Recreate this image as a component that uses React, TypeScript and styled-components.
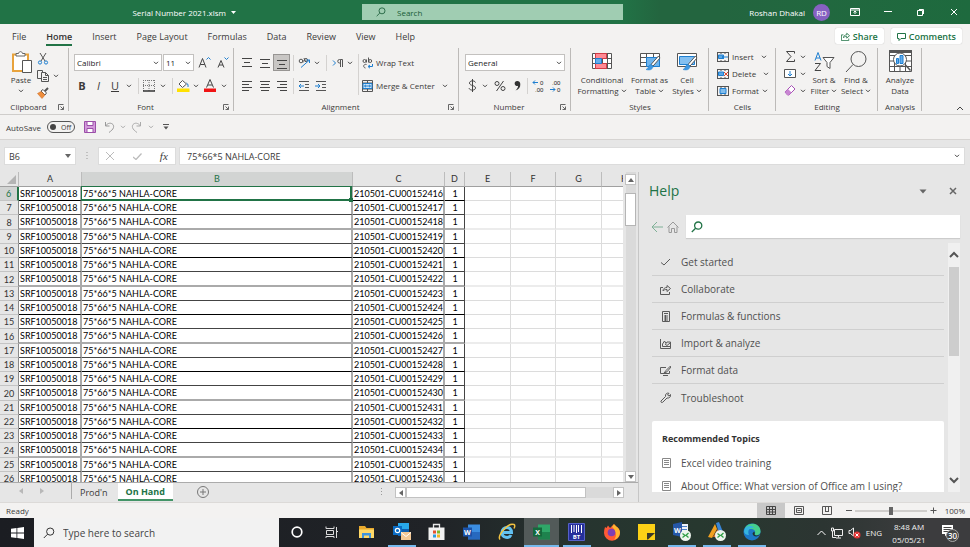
import React from "react";
import styled, { createGlobalStyle, css } from "styled-components";

const GlobalStyle = createGlobalStyle`
  * { box-sizing: border-box; }
  html, body { margin: 0; padding: 0; }
  body { font-family: "Open Sans", "Noto Sans", sans-serif; font-size: 8px; color: #3b3a39; overflow: hidden; }
  button, input, select { font: inherit; color: inherit; margin: 0; padding: 0; border: 0; background: none; outline: none; }
  a { color: inherit; text-decoration: none; }
`;

const Window = styled.div`
  height: 100vh;
  display: flex;
  flex-direction: column;
  background: #e6e6e6;
  svg { display: block; flex: none; fill: none; }
`;

/* ---------- title bar ---------- */
const TitleBar = styled.header`
  height: 24px;
  flex: none;
  display: grid;
  grid-template-columns: 362fr 261fr 347fr;
  align-items: center;
  color: #fff;
  background: linear-gradient(90deg, #217346 0 64%, #23653f 68% 74%, #21683f 85%, #1e6a3e 100%);
`;
const DocTitle = styled.button`
  justify-self: end;
  margin-right: 126px;
  display: flex;
  align-items: center;
  gap: 5px;
  white-space: nowrap;
`;
const TopSearch = styled.label`
  height: 16px;
  display: flex;
  align-items: center;
  gap: 11px;
  padding-left: 14px;
  background: #a0cdb2;
  color: #185c37;
  input { flex: 1; min-width: 0; }
  input::placeholder { color: #185c37; opacity: 1; }
`;
const Account = styled.div`
  display: flex;
  align-items: center;
  justify-content: flex-end;
`;
const Avatar = styled.span`
  width: 17px;
  height: 17px;
  margin: 0 8px;
  border-radius: 50%;
  background: #8661c1;
  line-height: 17px;
  text-align: center;
`;
const CaptionButton = styled.button`
  width: 33px;
  height: 24px;
  display: grid;
  place-items: center;
`;

/* ---------- ribbon tabs ---------- */
const TabBar = styled.nav`
  height: 24px;
  flex: none;
  display: flex;
  align-items: center;
  padding: 0 8px 0 4px;
  background: #f3f2f1;
`;
const RibbonTab = styled.button<{ $active?: boolean }>`
  height: 20px;
  padding: 0 8px;
  font-size: 9px;
  position: relative;
  white-space: nowrap;
  ${(p) => p.$active && css`
    font-weight: 600;
    color: #333;
    &::after { content: ""; position: absolute; left: 8px; right: 8px; bottom: 0; height: 2px; background: #217346; }
  `}
`;
const TabList = styled.div`
  flex: 1;
  display: flex;
  gap: 4px;
`;
const ActionButton = styled.button`
  height: 16px;
  margin-left: 7px;
  padding: 0 6px;
  display: flex;
  align-items: center;
  gap: 3px;
  border-radius: 2px;
  background: #fff;
  box-shadow: 0 0 1px #aaa;
  color: #217346;
  font-weight: 600;
  font-size: 9px;
`;

/* ---------- ribbon ---------- */
const Ribbon = styled.section`
  height: 67px;
  flex: none;
  display: flex;
  background: #f3f2f1;
  border-bottom: 1px solid #cfcdcb;
`;
const Group = styled.div<{ $w: number }>`
  width: ${(p) => p.$w}px;
  height: 66px;
  flex: none;
  display: flex;
  flex-direction: column;
  background: linear-gradient(#bcbab8, #bcbab8) right top / 1px 63px no-repeat;
`;
const GroupBody = styled.div<{ $pad?: string }>`
  flex: 1;
  display: flex;
  align-items: flex-start;
  padding: ${(p) => p.$pad ?? "0"};
`;
const GroupLabel = styled.div`
  height: 12px;
  flex: none;
  margin-bottom: 1px;
  display: flex;
  align-items: center;
  text-align: center;
  white-space: nowrap;
  line-height: 12px;
  span { flex: 1; }
  button { width: 12px; }
`;
const Stack = styled.div<{ $gap?: number }>`
  display: flex;
  flex-direction: column;
  gap: ${(p) => p.$gap ?? 0}px;
`;
const Line = styled.div<{ $h?: number; $gap?: number }>`
  height: ${(p) => p.$h ?? 17}px;
  display: flex;
  align-items: center;
  gap: ${(p) => p.$gap ?? 0}px;
`;
const Tool = styled.button<{ $w: number; $on?: boolean }>`
  width: ${(p) => p.$w}px;
  height: 17px;
  flex: none;
  display: flex;
  align-items: center;
  justify-content: center;
  font-size: 11px;
  ${(p) => p.$on && css`background: #c8c6c4; border: 1px solid #979593;`}
`;
const CollapseButton = styled(Tool)`
  height: 12px;
  align-self: flex-end;
`;
const TextTool = styled.button`
  height: 17px;
  display: flex;
  align-items: center;
  gap: 3px;
  white-space: nowrap;
`;
const BigTool = styled.button<{ $w: number }>`
  width: ${(p) => p.$w}px;
  flex: none;
  display: flex;
  flex-direction: column;
  align-items: center;
  line-height: 11px;
  white-space: nowrap;
  span { min-height: 11px; display: flex; align-items: center; gap: 2px; }
`;
const Rule = styled.i<{ $h?: number }>`
  width: 1px;
  height: ${(p) => p.$h ?? 16}px;
  flex: none;
  margin: 0 3px;
  background: #d4d2d0;
`;
const Combo = styled.label<{ $w: number }>`
  width: ${(p) => p.$w}px;
  height: 17px;
  flex: none;
  display: grid;
  grid-template-columns: 1fr 8px;
  align-items: center;
  border: 1px solid #c3c1bf;
  background: #fff;
  color: #222;
  select { grid-area: 1 / 1 / 2 / 3; appearance: none; padding-left: 2px; height: 15px; }
  svg { grid-area: 1 / 2; pointer-events: none; }
`;

/* ---------- quick access + formula bar ---------- */
const QuickBar = styled.div`
  height: 25px;
  flex: none;
  display: flex;
  align-items: center;
  padding-left: 6px;
  background: #f3f2f1;
  border-bottom: 1px solid #d6d4d2;
`;
const AutoSave = styled.label`
  display: flex;
  align-items: center;
  gap: 6px;
  margin-right: 5px;
`;
const Toggle = styled.span`
  width: 28px;
  height: 12px;
  display: flex;
  align-items: center;
  gap: 5px;
  padding-left: 2px;
  border: 1px solid #555;
  border-radius: 6px;
  font-size: 7px;
  input { appearance: none; width: 6px; height: 6px; border-radius: 50%; background: #444; }
`;
const FormulaBar = styled.div`
  flex: none;
  display: flex;
  align-items: center;
  padding: 7px 5px 7px 4px;
`;
const Field = styled.div<{ $w?: number }>`
  ${(p) => (p.$w ? `width: ${p.$w}px;` : "flex: 1;")}
  height: 18px;
  display: flex;
  align-items: center;
  justify-content: space-around;
  background: #fff;
  border: 1px solid #dcdcdc;
  font-size: 9px;
  input { flex: 1; min-width: 0; padding-left: 4px; }
  svg { margin-right: 4px; }
`;
const FunctionGlyph = styled.i`
  font-family: "Liberation Serif", serif;
  font-size: 11px;
`;
const FormulaInput = styled(Field)`
  margin-left: 3px;
  input { padding-left: 7px; }
`;
const Grip = styled.span`
  width: 22px;
  display: grid;
  place-items: center;
`;

/* ---------- worksheet ---------- */
const Main = styled.main`
  flex: 1;
  min-height: 0;
  display: flex;
`;
const Book = styled.section`
  flex: 1;
  min-width: 0;
  display: flex;
  flex-direction: column;
  border-right: 1px solid #c6c6c6;
`;
const SheetArea = styled.div`
  flex: 1;
  min-height: 0;
  display: flex;
  border-bottom: 1px solid #ababab;
`;
const SheetClip = styled.div`
  flex: 1;
  min-width: 0;
  overflow: hidden;
`;
const Sheet = styled.table`
  width: 648px;
  table-layout: fixed;
  border-collapse: separate;
  border-spacing: 0;
  background: #fff;
  font-family: Lato, sans-serif;
  font-size: 9px;
  color: #000;
`;
const ColHead = styled.th<{ $on?: boolean }>`
  height: 15px;
  padding: 0;
  font-weight: 400;
  line-height: 14px;
  color: ${(p) => (p.$on ? "#217346" : "#333")};
  background: ${(p) => (p.$on ? "#d2d4d3" : "#e6e6e6")};
  border-right: 1px solid #bcbcbc;
  border-bottom: 1px solid ${(p) => (p.$on ? "#217346" : "#a0a0a0")};
  svg { margin-left: 7px; }
`;
const RowHead = styled.th<{ $on?: boolean }>`
  padding: 0;
  font-weight: 400;
  text-align: center;
  color: ${(p) => (p.$on ? "#217346" : "#333")};
  background: ${(p) => (p.$on ? "#d2d4d3" : "#e6e6e6")};
  border-right: ${(p) => (p.$on ? "2px solid #217346" : "1px solid #8a8a8a")};
  border-bottom: 1px solid #c4c4c4;
`;
const Row = styled.tr`
  height: 14px;
  line-height: 13px;
  --line: 1px solid #444;
  --faint: 1px solid #dcdcdc;
  &:nth-child(4n + 1) { --line: 1px solid #000; }
  &:nth-child(4n + 3) { height: 15px; --line: 2px solid #aaa; --faint: 2px solid #ececec; }
`;
const Cell = styled.td<{ $edge?: string; $center?: boolean; $active?: boolean }>`
  padding: 0 0 0 1px;
  white-space: nowrap;
  text-align: ${(p) => (p.$center ? "center" : "left")};
  border-right: ${(p) => p.$edge ?? "1px solid #444"};
  border-bottom: var(--line);
  ${(p) => p.$active && css`
    position: relative;
    &::before { content: ""; position: absolute; inset: -1px; border: 2px solid #217346; border-width: 1px 2px 2px 1px; }
    &::after { content: ""; position: absolute; right: -2px; bottom: -2px; width: 4px; height: 4px; background: #217346; }
  `}
`;
const Blank = styled.td`
  padding: 0;
  border-right: 1px solid #dcdcdc;
  border-bottom: var(--faint);
`;
const VScroll = styled.div`
  width: 15px;
  display: flex;
  flex-direction: column;
  align-items: flex-end;
  padding: 2px 2px 0 0;
  background: linear-gradient(90deg, #e6e6e6 3px, #dadada 3px 13px, #e6e6e6 13px);
`;
const ScrollButton = styled.button`
  width: 11px;
  height: 11px;
  flex: none;
  display: grid;
  place-items: center;
  background: #fff;
  border: 1px solid #c2c2c2;
`;
const VThumb = styled.div`
  width: 11px;
  height: 33px;
  margin-top: 8px;
  margin-bottom: auto;
  background: #fff;
  border: 1px solid #b5b5b5;
`;
const SheetTabs = styled.div`
  height: 19px;
  flex: none;
  display: flex;
  align-items: flex-start;
  padding-right: 14px;
`;
const TabArrows = styled.div`
  width: 72px;
  height: 16px;
  display: flex;
  align-items: center;
  gap: 15px;
  padding-left: 18px;
  margin-right: 8px;
  border-right: 1px solid #ababab;
`;
const SheetTab = styled.button<{ $on?: boolean }>`
  height: 18px;
  padding: 0 ${(p) => (p.$on ? 8 : 10)}px 0 ${(p) => (p.$on ? 8 : 0)}px;
  font-size: 9px;
  white-space: nowrap;
  ${(p) => p.$on && css`background: #fff; color: #217346; font-weight: 700; border-bottom: 2px solid #439467;`}
`;
const AddSheet = styled.button`
  height: 18px;
  margin: 0 auto 0 24px;
  display: grid;
  place-items: center;
`;
const HScroll = styled.div`
  width: 229px;
  height: 11px;
  margin: 4px 0 0 12px;
  display: flex;
  background: #dadada;
`;
const HThumb = styled.div`
  width: 180px;
  margin-right: auto;
  background: #fff;
  border: 1px solid #c2c2c2;
`;

/* ---------- help pane ---------- */
const HelpPane = styled.aside`
  width: 331px;
  flex: none;
  display: flex;
  flex-direction: column;
  padding: 9px 10px 10px 12px;
  color: #505050;
`;
const HelpHeader = styled.div`
  height: 20px;
  display: flex;
  align-items: center;
  gap: 22px;
  padding-right: 3px;
  h2 { flex: 1; margin: 0 0 0 -2px; font-size: 14px; font-weight: 400; line-height: 20px; color: #217346; }
`;
const HelpSearchRow = styled.div`
  display: flex;
  align-items: center;
  margin-top: 14px;
  gap: 4px;
`;
const HelpSearch = styled.label`
  flex: 1;
  height: 23px;
  margin-left: 3px;
  padding-left: 5px;
  display: flex;
  align-items: center;
  background: #fff;
  box-shadow: 0 1px 1px #ccc;
  input { flex: 1; min-width: 0; }
`;
const HelpScroll = styled.div`
  flex: 1;
  min-height: 0;
  display: flex;
  margin-top: 5px;
`;
const HelpContent = styled.div`
  flex: 1;
  min-width: 0;
  overflow: hidden;
  padding: 6px 4px 0 1px;
`;
const HelpLink = styled.a`
  height: 27px;
  display: flex;
  align-items: center;
  gap: 10px;
  padding-left: 8px;
  border-bottom: 1px solid #cfcfcf;
  font-size: 10px;
  &:last-of-type { border-bottom: 0; }
`;
const Topics = styled.section`
  margin-top: 10px;
  padding: 9px 10px 0;
  background: #fff;
  border-radius: 2px;
  h3 { margin: 0 0 3px; font-size: 9px; line-height: 18px; font-weight: 700; color: #333; }
  a { height: 23px; display: flex; align-items: center; gap: 10px; font-size: 10px; white-space: nowrap; }
`;
const HelpBar = styled.div`
  width: 12px;
  display: flex;
  flex-direction: column;
  align-items: center;
  background: #f0f0f0;
  div { width: 10px; height: 89px; background: #cdcdcd; margin-bottom: auto; }
  button { height: 24px; }
`;

/* ---------- status bar ---------- */
const StatusBar = styled.footer`
  height: 16px;
  flex: none;
  display: flex;
  align-items: center;
  padding: 0 5px 0 6px;
  background: #f3f2f1;
  border-top: 1px solid #dcdad8;
`;
const ViewButtons = styled.div`
  display: flex;
  margin-right: 4px;
`;
const ViewButton = styled.button<{ $on?: boolean }>`
  width: 28px;
  height: 15px;
  display: grid;
  place-items: center;
  background: ${(p) => (p.$on ? "#c8c8c8" : "transparent")};
`;
const Zoom = styled.input`
  appearance: none;
  width: 72px;
  height: 11px;
  margin: 0 3px;
  &::-webkit-slider-runnable-track { height: 2px; background: #d0cecc; }
  &::-webkit-slider-thumb { appearance: none; width: 4px; height: 8px; margin-top: -3px; background: #666; }
`;
const ZoomValue = styled.span`
  width: 28px;
  text-align: right;
`;
const Spacer = styled.span`flex: 1;`;

/* ---------- taskbar ---------- */
const Taskbar = styled.nav`
  height: 29px;
  flex: none;
  display: flex;
  color: #f2f2f2;
  background: linear-gradient(90deg, #1b1d22 0%, #202327 45%, #26342f 60%, #27382f 72%, #2c3532 85%, #3c3c3e 95%);
`;
const StartButton = styled.button`
  width: 34px;
  display: grid;
  place-items: center;
`;
const TaskSearch = styled.label`
  width: 245px;
  display: flex;
  align-items: center;
  gap: 8px;
  padding-left: 9px;
  background: #f2f2f2;
  color: #333;
  font-size: 10px;
  input { flex: 1; min-width: 0; }
  input::placeholder { color: #444; opacity: 1; }
`;
const TaskButton = styled.button<{ $open?: boolean; $on?: boolean }>`
  width: 35px;
  flex: none;
  display: grid;
  place-items: center;
  padding-bottom: 2px;
  ${(p) => p.$open && css`
    background: linear-gradient(#76b9ed, #76b9ed) center bottom / ${p.$on ? "100%" : "28px"} 2px no-repeat ${p.$on ? ", #525a59" : ""};
  `}
`;
const Tray = styled.div`
  margin-left: auto;
  display: flex;
  align-items: center;
  gap: 5px;
  padding-right: 10px;
`;
const Clock = styled.time`
  width: 44px;
  margin-right: 5px;
  text-align: center;
  line-height: 13px;
  white-space: nowrap;
`;

/* ---------- glyphs ---------- */
const Chevron = ({ color = "#444" }: { color?: string }) => (
  <svg width="6" height="4" viewBox="0 0 6 4" stroke={color}><path d="M1 .8 3 2.8 5 .8" /></svg>
);
const Down = ({ w = 12 }: { w?: number }) => <Tool as="span" $w={w}><Chevron /></Tool>;
const Tri = ({ dir = "down", color = "#666" }: { dir?: "down" | "up" | "left" | "right"; color?: string }) => {
  const d = { down: "M0 1h6L3 5z", up: "M0 5h6L3 1z", left: "M5 0v6L1 3z", right: "M1 0v6l4-3z" }[dir];
  return <svg width="6" height="6" viewBox="0 0 6 6"><path fill={color} d={d} /></svg>;
};
const Lens = ({ size = 12, color = "#333", w = 1 }: { size?: number; color?: string; w?: number }) => (
  <svg width={size} height={size} viewBox="0 0 12 12" stroke={color} strokeWidth={w}><circle cx="7.2" cy="4.6" r="3.6" /><path d="M4.6 7.2.8 11" /></svg>
);
const Launcher = () => (
  <svg width="8" height="8" viewBox="0 0 8 8" stroke="#666"><path d="M1.500 7V1.500h5M3.500 3.500 6.500 6.500M6.500 3.500v3h-3" /></svg>
);
const Lines = ({ rows }: { rows: number[][] }) => (
  <svg width="12" height="12" viewBox="0 0 12 12" stroke="#444">
    {rows.map(([y, a, b]) => <path key={y} d={`M${a} ${y}.5H${b}`} />)}
  </svg>
);
const Indent = ({ flip }: { flip?: boolean }) => (
  <svg width="12" height="12" viewBox="0 0 12 12" stroke="#555">
    <path d="M1 1.5h10M7 4.5h4M7 7.5h4M1 10.5h10" /><path stroke="#1e7fd0" d={flip ? "M0 6h5M3 4l2 2-2 2" : "M1 6h5M3 4 1 6l2 2"} />
  </svg>
);
const GridIcon = ({ kind }: { kind: "insert" | "delete" | "format" }) => (
  <svg width="12" height="12" viewBox="0 0 12 12" stroke="#555">
    <path d="M.5 1v10M4 1v2M8 1v2M11.500 1v10M.5 1.5h11M.5 10.500h11M4 9v2M8 9v2" />
    {kind === "format" ? <path fill="#83bdeb" stroke="#1e7fd0" d="M3 3.500h6v5H3z" /> : <path fill="#5aa7e4" stroke="#1e7fd0" d="M1.500 4h5v3.500h-5z" />}
    {kind === "insert" && <path stroke="#1e7fd0" d="M11 6H5M7 4 5 6l2 2" />}
    {kind === "delete" && <path stroke="#e0492f" d="M7 4l4 4M11 4 7 8" />}
  </svg>
);
const Brush = () => <g><path d="M19.500 6 12 14.500l2 1.600L21 8z" fill="#fff" stroke="#555" /><path d="M12 14.500c-3 0-1.500 3.500-5 5 3 1 7 .5 7-3.400z" fill="#3f97e0" stroke="#1e7fd0" strokeWidth=".5" /></g>;
const Brand = ({ letter, fill, dark }: { letter: string; fill: string; dark: string }) => (
  <svg width="18" height="18" viewBox="0 0 18 18">
    <path fill={fill} d="M5 1.500h12v15H5z" /><path fill={dark} d="M5 9h12v7.500H5z" opacity=".6" /><path fill={dark} d="M0 4.500h9v9H0z" />
    <text x="4.500" y="12" fill="#fff" fontSize="7" fontWeight="700" textAnchor="middle">{letter}</text>
  </svg>
);
const Paper = () => <svg width="9" height="10" viewBox="0 0 9 10" stroke="#888"><path d="M.5.500h8v9h-8zM2 2.500h5M2 4.500h5M2 6.500h5" /></svg>;

const helpIcons = [
  <path key="a" d="M1 5.500 4 8l6-6" />,
  <path key="b" d="M3 3.500H.5v7h9V8M3 7c0-2.500 2-3.500 4-3.500V1.500l3.500 3-3.500 3v-2c-2 0-3 .2-4 1.500z" />,
  <path key="c" d="M2.500.500h7v10h-7zM4 2.500h4M4 5h4M4 7h4M4 9h4M5.500 4v6" />,
  <path key="d" d="M.5 1v9.500h10V4H7L6 5.500 4.500 3 2.500 6v2.500h8M5 6l2 1.500L10 5" />,
  <path key="e" d="M6 2.500H.5v6h9V6M3 10.500h5M10.500 1 6 5.500 4 8l3-1.200L11 2z" />,
  <path key="f" d="M10.500 2.500 9 4 7.500 3 9 1.300C7 .5 5 2 5.500 4.500L1 9c-.5 1.500 1 2 1.800 1.200L7 6c2.500.5 4-1.500 3.500-3.500z" />,
];
const helpTopics = ["Get started", "Collaborate", "Formulas & functions", "Import & analyze", "Format data", "Troubleshoot"];
const tabs = ["File", "Home", "Insert", "Page Layout", "Formulas", "Data", "Review", "View", "Help"];
const rows = Array.from({ length: 21 }, (_, i) => i);
const greyEdge = "2px solid #aaa";
const centerRows = { top: [[1, 1, 11], [5, 3, 9], [9, 1, 11]], mid: [[2, 1, 11], [6, 3, 9], [10, 1, 11]], bot: [[3, 1, 11], [7, 3, 9], [11, 1, 11]] };
const para = (side: "l" | "c" | "r") => [1, 4, 7, 10].map((y, i) => (i % 2 === 0 ? [y, 1, 11] : side === "l" ? [y, 1, 8] : side === "c" ? [y, 2, 10] : [y, 4, 11]));

const Label = ({ text, launch }: { text: string; launch?: boolean }) => (
  <GroupLabel><span>{text}</span>{launch && <button aria-label={`${text} settings`}><Launcher /></button>}</GroupLabel>
);

function RibbonPanel() {
  return (
    <Ribbon>
      <Group $w={69}>
        <GroupBody $pad="2px 0 0 8px">
          <BigTool $w={26}>
            <svg width="22" height="24" viewBox="0 0 22 24"><path d="M3 4.500h15V21H3z" fill="#fff" stroke="#e8a33d" strokeWidth="2" /><path d="M6 6V3.500h2.500C9 1 12 1 12.500 3.500H15V6z" fill="#fff" stroke="#666" /><path d="M12.500 10.500h9v12h-9z" fill="#fff" stroke="#555" /></svg>
            <span>Paste</span><span><Chevron /></span>
          </BigTool>
          <Stack>
            <Tool $w={18} aria-label="Cut"><svg width="12" height="13" viewBox="0 0 12 13" stroke="#555"><path d="M3 1l5 8M9 1 4 9" /><g stroke="#1e7fd0"><circle cx="3" cy="10.500" r="1.600" /><circle cx="9" cy="10.500" r="1.600" /></g></svg></Tool>
            <Line><Tool $w={18} aria-label="Copy"><svg width="12" height="13" viewBox="0 0 12 13" stroke="#555"><path d="M4 9.500H.5v-8h5V3M4.500 3.500h4l3 3v6h-7zM8.500 3.500v3h3M6 8.500h4M6 10.500h4" /></svg></Tool><Down w={7} /></Line>
            <Tool $w={18} aria-label="Format Painter"><svg width="12" height="12" viewBox="0 0 12 12"><path d="M11 1 7.500 4.500" stroke="#555" strokeWidth="2" /><path d="M4 4l4 4 1.500-2L6 2.500z" fill="#fff" stroke="#555" /><path d="M4 4.500.5 6.500 5 11.500 8 8z" fill="#ef8e3c" stroke="#c8641c" strokeWidth=".5" /></svg></Tool>
          </Stack>
        </GroupBody>
        <Label text="Clipboard" launch />
      </Group>
      <Group $w={165}>
        <GroupBody $pad="6px 0 0 5px">
          <Stack $gap={6}>
            <Line $gap={1}>
              <Combo $w={88}><select aria-label="Font"><option>Calibri</option></select><Chevron /></Combo>
              <Combo $w={31}><select aria-label="Font size"><option>11</option></select><Chevron /></Combo>
              <Tool $w={19} aria-label="Increase font size"><svg width="13" height="13" viewBox="0 0 13 13" stroke="#444"><path d="M1 11.500 4.500 2.500 8 11.500M2.300 8.500h4.400" /><path stroke="#1e7fd0" d="M8.500 3.500l2-2 2 2" /></svg></Tool>
              <Tool $w={16} aria-label="Decrease font size"><svg width="12" height="13" viewBox="0 0 12 13" stroke="#444"><path d="M1 11.500 4 4.500 7 11.500M2 9h4" /><path stroke="#1e7fd0" d="M7.500 1.500l2 2 2-2" /></svg></Tool>
            </Line>
            <Line>
              <Tool $w={16}><b>B</b></Tool><Tool $w={17}><i>I</i></Tool><Tool $w={16}><u>U</u></Tool><Down />
              <Rule />
              <Tool $w={14} aria-label="Borders"><svg width="12" height="12" viewBox="0 0 12 12" stroke="#777"><path strokeDasharray="1 1" d="M0 .5h12M.5 0v11M11.500 0v11M6 0v11M0 5.500h12" /><path stroke="#333" strokeWidth="1.500" d="M0 11h12" /></svg></Tool><Down w={13} />
              <Rule />
              <Tool $w={14} aria-label="Fill color"><svg width="13" height="13" viewBox="0 0 13 13"><path d="M5.500 1.500 9.500 5 5.500 8.500 2 5z" stroke="#555" fill="#fff" /><path d="M9.500 4c2 1 1.500 3 1.500 4" stroke="#1e7fd0" /><path fill="#ffe100" d="M0 9.500h12.500V13H0z" /></svg></Tool><Down />
              <Tool $w={16} aria-label="Font color"><svg width="12" height="13" viewBox="0 0 12 13"><path stroke="#444" d="M2.500 8.500 6 .500 9.500 8.500M4 6h4" /><path fill="#f01414" d="M0 9.500h12V13H0z" /></svg></Tool><Down />
            </Line>
          </Stack>
        </GroupBody>
        <Label text="Font" launch />
      </Group>
      <Group $w={225}>
        <GroupBody $pad="6px 0 0 4px">
          <Stack $gap={6}>
            <Line>
              <Tool $w={18} aria-label="Top align"><Lines rows={centerRows.top} /></Tool>
              <Tool $w={17} aria-label="Middle align"><Lines rows={centerRows.mid} /></Tool>
              <Tool $w={17} $on aria-label="Bottom align"><Lines rows={centerRows.bot} /></Tool>
              <Rule />
              <Tool $w={14} aria-label="Orientation"><svg width="13" height="13" viewBox="0 0 13 13" stroke="#555"><circle cx="3" cy="5" r="1.800" /><path d="M5 6.500V4M6 2l1.500 4" /><circle cx="8" cy="4" r="1.500" /><path stroke="#1e7fd0" d="M3 11.500 11.500 4M8.500 4h3v3" /></svg></Tool><Down />
              <Rule />
              <Tool $w={15} aria-label="Text direction"><svg width="12" height="10" viewBox="0 0 12 10" stroke="#555"><path stroke="#1e7fd0" d="M1 2.500 3.500 5 1 7.500" /><path d="M8.500 9V1.500h-1a1.500 1.500 0 0 0 0 3.500h1M10.500 9V1.500h-2" /></svg></Tool><Down w={10} />
            </Line>
            <Line>
              <Tool $w={18} aria-label="Align left"><Lines rows={para("l")} /></Tool>
              <Tool $w={17} aria-label="Align center"><Lines rows={para("c")} /></Tool>
              <Tool $w={17} aria-label="Align right"><Lines rows={para("r")} /></Tool>
              <Rule />
              <Tool $w={14} aria-label="Decrease indent"><Indent /></Tool>
              <Tool $w={20} aria-label="Increase indent"><Indent flip /></Tool>
            </Line>
          </Stack>
          <Rule $h={41} />
          <Stack $gap={6}>
            <TextTool><svg width="11" height="12" viewBox="0 0 11 12" stroke="#555"><circle cx="2.500" cy="4" r="1.500" /><path d="M4.500 5.500V2.500M6.500.500V5.500M4.500 7.500c-3-1-4 3-1 3.500" /><circle cx="8.200" cy="4" r="1.500" /><path stroke="#1e7fd0" d="M10.500 7v2.500h-4M8 8 6 9.500l2 1.700" /></svg>Wrap Text</TextTool>
            <TextTool><svg width="11" height="12" viewBox="0 0 11 12" stroke="#555"><path d="M.5.500h10v11H.5zM.5 3h10M.5 9h10M5.500.500V3M5.500 9v2.500" /><path fill="#cfe5f7" stroke="#1e7fd0" d="M1 3.500h9v5H1z" /><path stroke="#1e7fd0" d="M2.500 6h6M4 4.800 2.500 6 4 7.200M7 4.800 8.500 6 7 7.200" /></svg>Merge &amp; Center<Down w={14} /></TextTool>
          </Stack>
        </GroupBody>
        <Label text="Alignment" launch />
      </Group>
      <Group $w={112}>
        <GroupBody $pad="6px 0 0 6px">
          <Stack $gap={6}>
            <Combo $w={100}><select aria-label="Number format"><option>General</option></select><Chevron /></Combo>
            <Line>
              <Tool $w={15} aria-label="Currency"><svg width="9" height="13" viewBox="0 0 9 13" stroke="#444"><path d="M4.500 0v13M7.500 3.500C6.500 1 1.500 1.500 1.500 4c0 3 6 2 6 5 0 2.500-5.500 3-6.500.2" /></svg></Tool><Down w={10} />
              <Tool $w={20} aria-label="Percent"><svg width="12" height="12" viewBox="0 0 12 12" stroke="#444"><circle cx="3" cy="3.500" r="2" /><circle cx="9" cy="8.500" r="2" /><path d="M9.500 1l-7 10" /></svg></Tool>
              <Tool $w={14} aria-label="Comma"><svg width="7" height="12" viewBox="0 0 7 12"><path fill="#333" d="M3.300 1a2.500 2.500 0 1 0 .8 4.800C4 8 3 9 1.500 10.500 5 9.500 6.500 7 6.300 4 6.200 2 5 1 3.300 1z" /></svg></Tool>
              <Rule />
              <Tool $w={15} aria-label="Increase decimal"><svg width="13" height="16" viewBox="0 0 13 16"><path stroke="#1e7fd0" d="M1 4.500h5M3 2.500 1 4.500l2 2" /><g fill="#222" fontSize="6" fontFamily="Liberation Sans, sans-serif"><text x="8" y="7">0</text><text x="3" y="14">.00</text></g></svg></Tool>
              <Tool $w={18} aria-label="Decrease decimal"><svg width="13" height="16" viewBox="0 0 13 16"><path stroke="#1e7fd0" d="M1 11.500h5M4 9.500l2 2-2 2" /><g fill="#222" fontSize="6" fontFamily="Liberation Sans, sans-serif"><text x="3" y="7">.00</text><text x="8" y="14">0</text></g></svg></Tool>
            </Line>
          </Stack>
        </GroupBody>
        <Label text="Number" launch />
      </Group>
      <Group $w={138}>
        <GroupBody $pad="2px 0 0 5px">
          <BigTool $w={52}>
            <svg width="22" height="24" viewBox="0 0 22 24" stroke="#555"><path fill="#fff" d="M1.500 3.500h19v15h-19z" /><path d="M1 8.500h19.500M1 13.500h19.500M16.500 3.500v15M11.500 3.500v15" /><path fill="#ff8a94" stroke="#d13b46" d="M4.500 3.500h11v5h-11zM4.500 13.500h11v5h-11z" /><path fill="#63adec" stroke="#1e7fd0" d="M4.500 8.500h6v5h-6z" /></svg>
            <span>Conditional</span><span>Formatting<Chevron /></span>
          </BigTool>
          <BigTool $w={43}>
            <svg width="22" height="24" viewBox="0 0 22 24" stroke="#555"><path fill="#fff" d="M1.500 3.500h19v13h-19z" /><path d="M1 7.500h19M7.500 3.500v13M14.500 3.500v4M1 12.500h7" /><path fill="#6fb5ee" stroke="#1e7fd0" d="M7.500 7.500h13v9h-13z" /><Brush /></svg>
            <span>Format as</span><span>Table<Chevron /></span>
          </BigTool>
          <BigTool $w={32}>
            <svg width="22" height="24" viewBox="0 0 22 24" stroke="#555"><path fill="#fff" d="M1.500 3.500h19v13h-19z" /><path fill="#83bff0" stroke="#1e7fd0" d="M3.500 6.500h15v8h-15z" /><Brush /></svg>
            <span>Cell</span><span>Styles<Chevron /></span>
          </BigTool>
        </GroupBody>
        <Label text="Styles" />
      </Group>
      <Group $w={67}>
        <GroupBody $pad="0 0 0 8px">
          <Stack>
            <TextTool><GridIcon kind="insert" />Insert<Down w={14} /></TextTool>
            <TextTool><GridIcon kind="delete" />Delete<Down w={14} /></TextTool>
            <TextTool><GridIcon kind="format" />Format<Chevron /></TextTool>
          </Stack>
        </GroupBody>
        <Label text="Cells" />
      </Group>
      <Group $w={102}>
        <GroupBody $pad="0 0 0 6px">
          <Stack>
            <Line><Tool $w={16} aria-label="Sum"><svg width="10" height="11" viewBox="0 0 10 11" stroke="#444"><path d="M9.500 2.500v-2h-8L6 5.500l-4.500 5h8v-2" /></svg></Tool><Down w={10} /></Line>
            <Line><Tool $w={16} aria-label="Fill"><svg width="12" height="11" viewBox="0 0 12 11"><path fill="#fff" stroke="#555" d="M.5 1.500h11v8H.5z" /><path stroke="#1e7fd0" d="M6 3v5M4 6l2 2 2-2" /></svg></Tool><Down w={10} /></Line>
            <Line><Tool $w={16} aria-label="Clear"><svg width="12" height="11" viewBox="0 0 12 11"><path fill="#fff" stroke="#a74fb5" d="M7.500.500 11 4 5 10H3.500L1 7z" /><path fill="#c886d2" d="M4 4 7.500 7.500 5 10H3.500L1 7z" /></svg></Tool><Down w={10} /></Line>
          </Stack>
          <Line $h={50}>
            <BigTool $w={32}>
              <svg width="22" height="24" viewBox="0 0 22 24"><path stroke="#1e7fd0" d="M2 10.500 5 2.500 8 10.500M3 8h4" /><path stroke="#444" d="M2 13.500h5.500l-5.500 7h6" /><path fill="#fff" stroke="#555" d="M10 7.500h11l-4 5v6l-3-2v-4z" /></svg>
              <span>Sort &amp;</span><span>Filter<Chevron /></span>
            </BigTool>
            <BigTool $w={32}>
              <svg width="22" height="24" viewBox="0 0 22 24" stroke="#555"><circle cx="13.500" cy="9" r="7.500" /><path d="M8 14.500 1 22" /></svg>
              <span>Find &amp;</span><span>Select<Chevron /></span>
            </BigTool>
          </Line>
        </GroupBody>
        <Label text="Editing" />
      </Group>
      <Group $w={44}>
        <GroupBody $pad="2px 0 0 5px">
          <BigTool $w={34}>
            <svg width="24" height="24" viewBox="0 0 24 24" stroke="#555"><path fill="#fff" d="M1.500.500h22v21h-22z" /><path d="M1.500 5.500h22M1.500 11h22M1.500 16.500h22M6.500 5v17M17.500 5v17M12 16v6" /><path fill="#555" d="M1.500.500h22v2h-22z" /><circle cx="12" cy="9.500" r="6.500" fill="#fff" /><path stroke="#1e7fd0" fill="#63adec" d="M8.500 8.500h2v5h-2zM12 5.500h3v8h-3z" /><path d="M17 14.500l5.500 6" strokeWidth="1.500" /></svg>
            <span>Analyze</span><span>Data</span>
          </BigTool>
        </GroupBody>
        <Label text="Analysis" />
      </Group>
      <Spacer />
      <CollapseButton $w={20} aria-label="Collapse ribbon"><svg width="8" height="5" viewBox="0 0 8 5" stroke="#444"><path d="M1 4l3-3 3 3" /></svg></CollapseButton>
    </Ribbon>
  );
}

function Worksheet() {
  return (
    <Book>
      <SheetArea>
        <SheetClip>
          <Sheet>
            <colgroup>{[19, 63, 271, 92, 20, 46, 45, 46, 46].map((w, i) => <col key={i} width={w} />)}</colgroup>
            <thead>
              <tr>
                <ColHead><svg width="9" height="9" viewBox="0 0 9 9"><path d="M9 0v9H0z" fill="#b4b4b4" /></svg></ColHead>
                {"ABCDEFGH".split("").map((c) => <ColHead key={c} $on={c === "B"}>{c}</ColHead>)}
              </tr>
            </thead>
            <tbody>
              {rows.map((i) => (
                <Row key={i}>
                  <RowHead $on={i === 0}>{i + 6}</RowHead>
                  <Cell $edge={greyEdge}>SRF10050018</Cell>
                  <Cell $edge={greyEdge} $active={i === 0}>75*66*5 NAHLA-CORE</Cell>
                  <Cell $edge={greyEdge}>{`210501-CU00${152416 + i}`}</Cell>
                  <Cell $center>1</Cell>
                  <Blank /><Blank /><Blank /><Blank />
                </Row>
              ))}
            </tbody>
          </Sheet>
        </SheetClip>
        <VScroll>
          <ScrollButton aria-label="Scroll up"><Tri dir="up" /></ScrollButton>
          <VThumb />
          <ScrollButton aria-label="Scroll down"><Tri /></ScrollButton>
        </VScroll>
      </SheetArea>
      <SheetTabs>
        <TabArrows><Tri dir="left" color="#b8b8b8" /><Tri dir="right" color="#b8b8b8" /></TabArrows>
        <SheetTab>Prod'n</SheetTab>
        <SheetTab $on>On Hand</SheetTab>
        <AddSheet aria-label="New sheet"><svg width="12" height="12" viewBox="0 0 12 12" stroke="#777"><circle cx="6" cy="6" r="5.500" /><path d="M6 3v6M3 6h6" /></svg></AddSheet>
        <svg width="3" height="18" viewBox="0 0 3 18" stroke="#999"><path strokeDasharray="1 2" d="M1.500 5v9" /></svg>
        <HScroll>
          <ScrollButton aria-label="Scroll left"><Tri dir="left" /></ScrollButton>
          <HThumb />
          <ScrollButton aria-label="Scroll right"><Tri dir="right" /></ScrollButton>
        </HScroll>
      </SheetTabs>
    </Book>
  );
}

function Help() {
  return (
    <HelpPane>
      <HelpHeader>
        <h2>Help</h2>
        <button aria-label="Pane options"><svg width="8" height="5" viewBox="0 0 8 5"><path fill="#666" d="M.5.500h7L4 4.500z" /></svg></button>
        <button aria-label="Close help"><svg width="8" height="8" viewBox="0 0 8 8" stroke="#666" strokeWidth="1.500"><path d="M1 1l6 6M7 1 1 7" /></svg></button>
      </HelpHeader>
      <HelpSearchRow>
        <button aria-label="Back"><svg width="12" height="12" viewBox="0 0 12 12" stroke="#7fb096"><path d="M12 6H1M6 1 1 6l5 5" /></svg></button>
        <button aria-label="Home"><svg width="12" height="12" viewBox="0 0 12 12" stroke="#999"><path d="M.5 6.500 6 1l5.500 5.500M2 5.500v6h2.500v-4h3v4H10v-6" /></svg></button>
        <HelpSearch><Lens color="#217346" w={1.3} /><input aria-label="Search help" /></HelpSearch>
      </HelpSearchRow>
      <HelpScroll>
        <HelpContent>
          <nav>
            {helpTopics.map((t, i) => (
              <HelpLink key={t} href="#"><svg width="11" height="11" viewBox="0 0 11 11" stroke="#5a5a5a">{helpIcons[i]}</svg>{t}</HelpLink>
            ))}
          </nav>
          <Topics>
            <h3>Recommended Topics</h3>
            <a href="#"><Paper />Excel video training</a>
            <a href="#"><Paper />About Office: What version of Office am I using?</a>
          </Topics>
        </HelpContent>
        <HelpBar>
          <button aria-label="Scroll help up"><svg width="10" height="8" viewBox="0 0 10 8" stroke="#555" strokeWidth="2"><path d="M1 6l4-4 4 4" /></svg></button>
          <div />
          <button aria-label="Scroll help down"><svg width="10" height="8" viewBox="0 0 10 8" stroke="#555" strokeWidth="2"><path d="M1 2l4 4 4-4" /></svg></button>
        </HelpBar>
      </HelpScroll>
    </HelpPane>
  );
}

const SyncBadge = () => <g><circle cx="13.500" cy="13.500" r="5.500" fill="#eef5ee" /><path d="M10.500 11.500l2.500 2-2.500 2M16.500 11l-2.500 2.300 2.500 2.200" stroke="#2f9e44" strokeWidth="1.300" /></g>;

function TaskbarPanel() {
  return (
    <Taskbar>
      <StartButton aria-label="Start"><svg width="13" height="12" viewBox="0 0 13 12"><path fill="#fff" d="M0 1.800 5.500 1v4.600H0zM6.300.900 13 0v5.600H6.300zM0 6.400h5.500V11L0 10.200zM6.300 6.400H13V12l-6.700-.9z" /></svg></StartButton>
      <TaskSearch><Lens /><input placeholder="Type here to search" aria-label="Search Windows" /></TaskSearch>
      <TaskButton aria-label="Cortana"><svg width="12" height="12" viewBox="0 0 12 12" stroke="#fff" strokeWidth="1.700"><circle cx="6" cy="6" r="4.800" /></svg></TaskButton>
      <TaskButton aria-label="Task view"><svg width="14" height="12" viewBox="0 0 14 12" stroke="#ddd"><path d="M1 .5v2h8v-2M1.500 4.500h7v4h-7zM1 12v-1.500h8V12M11.500 1v11M11 5.500h2" /></svg></TaskButton>
      <TaskButton aria-label="File Explorer"><svg width="17" height="14" viewBox="0 0 17 14"><path fill="#e8a92d" d="M1 1h6l1.500 2H16v10H1z" /><path fill="#ffd867" d="M1 4.500h15V13H1z" /><path fill="#3f94dd" d="M4 8h9v5h-2v-2.500H6V13H4z" /></svg></TaskButton>
      <TaskButton $open aria-label="Outlook"><svg width="19" height="18" viewBox="0 0 19 18"><path fill="#28a8ea" d="M6 0h11v11H6z" /><path fill="#0f5fae" d="M6 6h11v7H6z" /><path fill="#0a6cc4" d="M1 3h9v9H1z" /><circle cx="5.500" cy="7.500" r="2.200" stroke="#fff" strokeWidth="1.200" /><path fill="#f3c995" d="M9 9h10v8H9z" /><path stroke="#fff" d="M9 9.500l5 4 5-4" /></svg></TaskButton>
      <TaskButton aria-label="Store"><svg width="17" height="18" viewBox="0 0 17 18"><path stroke="#e8e8e8" strokeWidth="1.300" d="M5.500 5V1.500h6V5" /><path fill="#f2f2f2" d="M.5 4.500h16V17H.5z" /><path fill="#e5532f" d="M5 7.500h3v3H5z" /><path fill="#7db928" d="M9 7.500h3v3H9z" /><path fill="#2a9fe0" d="M5 11.500h3v3H5z" /><path fill="#f5b720" d="M9 11.500h3v3H9z" /></svg></TaskButton>
      <TaskButton aria-label="Word"><Brand letter="W" fill="#3b8de0" dark="#1b52a8" /></TaskButton>
      <TaskButton aria-label="Internet Explorer"><svg width="18" height="18" viewBox="0 0 18 18"><path stroke="#62c2f2" strokeWidth="3" d="M4 9.500h9.500C13.500 2.500 4 3 4 9.500c0 6 7.500 6 9 2.500" /><path stroke="#f2c341" strokeWidth="1.500" d="M2 16.500C-1 13 10-1 16 1.500c1 .5 1 2 0 4" /></svg></TaskButton>
      <TaskButton $open $on aria-label="Excel"><Brand letter="X" fill="#2fa768" dark="#14693c" /></TaskButton>
      <TaskButton $open aria-label="BarTender"><svg width="17" height="18" viewBox="0 0 17 18"><path fill="#26309b" stroke="#5560c8" d="M.5.500h16v17H.5z" /><path stroke="#fff" d="M3.500 2v8M6 2v7M8.500 2v8M10.500 2v7M13.500 2v8" /><text x="8.500" y="16" fill="#fff" fontSize="6" fontWeight="700" textAnchor="middle">BT</text></svg></TaskButton>
      <TaskButton aria-label="Firefox"><svg width="18" height="18" viewBox="0 0 18 18"><path fill="#ff5a36" d="M2 4l1.500 1L5 2.500 7 5l4-4c1 2 6 4 6 8.500A8 8 0 0 1 1 10c0-2 .3-4 1-6z" /><path fill="#ffb52e" d="M11 1c1 2 6 4 6 8.500a8 8 0 0 1-6 7.300C15 13 12 6 9 4z" /><circle cx="8.500" cy="9.500" r="3.800" fill="#7d3fb5" /></svg></TaskButton>
      <TaskButton aria-label="Sticky Notes"><svg width="17" height="16" viewBox="0 0 17 16"><path fill="#fcd116" d="M0 0h17v16H0z" /><path fill="#3a3a2a" d="M9 9h8l-7 6.500H9z" /></svg></TaskButton>
      <TaskButton $open aria-label="Word remote"><svg width="19" height="19" viewBox="0 0 19 19"><path fill="#eef2fa" d="M8 2h8v13H8z" /><path stroke="#4b7fc8" d="M9 4.500h6M9 7.500h6" /><path fill="#2557a7" d="M1 2l9-2v15l-9-2z" /><text x="5.500" y="10.500" fill="#fff" fontSize="7" fontWeight="700" textAnchor="middle">W</text><SyncBadge /></svg></TaskButton>
      <TaskButton $open aria-label="Dynamics remote"><svg width="19" height="19" viewBox="0 0 19 19"><path fill="#f0a020" d="M8 2 1 15l4 1 5-9z" /><path fill="#3a86d8" d="M9 1l3-1 4 10-3 5z" /><path fill="#e8762c" d="M6 15l5-8 1 8z" /><SyncBadge /></svg></TaskButton>
      <TaskButton $open aria-label="Edge"><svg width="18" height="18" viewBox="0 0 18 18"><circle cx="9" cy="9" r="8.500" fill="#1d78c8" /><path fill="#45cf8c" d="M2 5C6-2 18 0 17.500 9c-.5 3-4 4-6 2.500C13 9 12 6.500 9 6c-3-.5-6 1-7 3z" /><path fill="#35b4e0" d="M1 8c1-5 7-6.500 10.500-3C7 4 4 7 6 12 3 12 1 10.500 1 8z" /><path fill="#20332f" d="M11 8.500c1.500 1 .5 3 .5 3 1.500 1.500 4 1 5.500-.5-1 3-7 3.500-7.500-.5z" /></svg></TaskButton>
      <Tray>
        <svg width="9" height="6" viewBox="0 0 9 6" stroke="#fff"><path d="M.5 5 4.500 1l4 4" /></svg>
        <svg width="12" height="12" viewBox="0 0 12 12" stroke="#eee"><path d="M3.500 2.500h8v6h-8zM7.500 8.500v2M5 11h5M.5 1v3h2V1zM1.500 4v6.500H5" /></svg>
        <svg width="13" height="13" viewBox="0 0 13 13"><path stroke="#eee" d="M1 4.500h1.500L5.500 2v8L2.500 7.500H1z" /><circle cx="9" cy="9" r="3.500" fill="#e03535" /><path stroke="#fff" d="M7.500 7.500l3 3M10.500 7.500l-3 3" /></svg>
        <span>ENG</span>
        <Clock>8:48 AM<br />05/05/21</Clock>
        <svg width="19" height="18" viewBox="0 0 19 18"><path fill="#fff" d="M1 1h11v9H6l-2 2.500V10H1z" /><path stroke="#444" d="M2.500 3.500h8M2.500 5.500h8M2.500 7.500h5" /><circle cx="11.500" cy="11.500" r="6" fill="#444" stroke="#aaa" /><text x="11.500" y="14.500" fill="#fff" fontSize="8" fontWeight="600" textAnchor="middle">30</text></svg>
      </Tray>
    </Taskbar>
  );
}

export default function App() {
  return (
    <Window>
      <GlobalStyle />
      <TitleBar>
        <DocTitle>Serial Number 2021.xlsm <svg width="5" height="3" viewBox="0 0 5 3"><path fill="#fff" d="M0 0h5L2.500 3z" /></svg></DocTitle>
        <TopSearch><Lens size={10} color="#185c37" /><input placeholder="Search" aria-label="Search" /></TopSearch>
        <Account>
          <span>Roshan Dhakal</span>
          <Avatar>RD</Avatar>
          <CaptionButton aria-label="Ribbon display"><svg width="10" height="8" viewBox="0 0 10 8" stroke="#fff"><path d="M.5.500h9v7h-9zM.5 2h9M5 6V3.500M3.500 4.500 5 3l1.500 1.500" /></svg></CaptionButton>
          <CaptionButton aria-label="Minimize"><svg width="8" height="2" viewBox="0 0 8 2" stroke="#fff"><path d="M0 .5h8" /></svg></CaptionButton>
          <CaptionButton aria-label="Restore"><svg width="7" height="7" viewBox="0 0 7 7" stroke="#fff"><path d="M.5 1.500h5v5h-5zM2 .5h4.500V5" /></svg></CaptionButton>
          <CaptionButton aria-label="Close"><svg width="8" height="8" viewBox="0 0 8 8" stroke="#fff"><path d="M1 1l6 6M7 1 1 7" /></svg></CaptionButton>
        </Account>
      </TitleBar>
      <TabBar>
        <TabList>{tabs.map((t) => <RibbonTab key={t} $active={t === "Home"}>{t}</RibbonTab>)}</TabList>
        <ActionButton><svg width="9" height="9" viewBox="0 0 11 11" stroke="#217346">{helpIcons[1]}</svg>Share</ActionButton>
        <ActionButton><svg width="9" height="9" viewBox="0 0 9 9" stroke="#217346"><path d="M.5 1.500h8v5H4l-2 2v-2H.5z" /></svg>Comments</ActionButton>
      </TabBar>
      <RibbonPanel />
      <QuickBar>
        <AutoSave>AutoSave<Toggle><input type="checkbox" />Off</Toggle></AutoSave>
        <Tool $w={20} aria-label="Save"><svg width="12" height="12" viewBox="0 0 12 12" stroke="#9b4fa8"><path fill="#d49bdc" d="M.5.500h11v11H.5z" /><path fill="#fff" d="M3 .5h6v4H3zM3 7.500h6v4H3z" /></svg></Tool>
        <Tool $w={20} aria-label="Undo"><svg width="11" height="12" viewBox="0 0 11 12" stroke="#999"><path d="M1.500 1v4h4M1.500 5C5 0 10.500 2.500 9.500 6.500 9 8.500 7 10 5 11.500" /></svg></Tool><Chevron color="#aaa" />
        <Tool $w={22} aria-label="Redo"><svg width="11" height="12" viewBox="0 0 11 12" stroke="#aaa"><path d="M9.500 1v4h-4M9.500 5C6 0 .5 2.500 1.500 6.500 2 8.500 4 10 6 11.500" /></svg></Tool><Chevron color="#aaa" />
        <Tool $w={24} aria-label="Customize toolbar"><svg width="6" height="6" viewBox="0 0 6 6"><path stroke="#555" d="M0 .5h6" /><path fill="#555" d="M.5 2.500h5L3 5.500z" /></svg></Tool>
      </QuickBar>
      <FormulaBar>
        <Field $w={72}><input defaultValue="B6" aria-label="Name box" /><Tri /></Field>
        <Grip><svg width="2" height="8" viewBox="0 0 2 8" stroke="#999"><path strokeDasharray="1 2" d="M1 0v8" /></svg></Grip>
        <Field $w={78}>
          <button aria-label="Cancel"><svg width="8" height="8" viewBox="0 0 8 8" stroke="#bbb"><path d="M0 0l8 8M8 0 0 8" /></svg></button>
          <button aria-label="Enter"><svg width="9" height="7" viewBox="0 0 9 7" stroke="#bbb" strokeWidth="1.300"><path d="M0 4l3 2.500L8.500.500" /></svg></button>
          <button aria-label="Insert function"><FunctionGlyph>fx</FunctionGlyph></button>
        </Field>
        <FormulaInput><input defaultValue="75*66*5 NAHLA-CORE" aria-label="Formula" /><Chevron /></FormulaInput>
      </FormulaBar>
      <Main><Worksheet /><Help /></Main>
      <StatusBar>
        <span>Ready</span><Spacer />
        <ViewButtons>
          <ViewButton $on aria-label="Normal view"><svg width="10" height="9" viewBox="0 0 10 9" stroke="#444"><path d="M.5.500h9v8h-9zM0 3.500h10M0 6h10M3.500 0v9M6.500 0v9" /></svg></ViewButton>
          <ViewButton aria-label="Page layout view"><svg width="10" height="9" viewBox="0 0 10 9" stroke="#555"><path d="M.5.500h9v8h-9zM2.500 2.500h5v4h-5zM3.500 4.500h3" /></svg></ViewButton>
          <ViewButton aria-label="Page break view"><svg width="10" height="9" viewBox="0 0 10 9" stroke="#555"><path d="M.5.500h9v8h-9zM3.500 0v5.500M6.500 0v5.500M3 5.500h4" /></svg></ViewButton>
        </ViewButtons>
        <button aria-label="Zoom out"><svg width="7" height="7" viewBox="0 0 7 7" stroke="#555"><path d="M1 3.500h6" /></svg></button>
        <Zoom type="range" min={0} max={100} defaultValue={50} aria-label="Zoom" />
        <button aria-label="Zoom in"><svg width="7" height="7" viewBox="0 0 7 7" stroke="#555"><path d="M.5 3.500h6M3.500.500v6" /></svg></button>
        <ZoomValue>100%</ZoomValue>
      </StatusBar>
      <TaskbarPanel />
    </Window>
  );
}
